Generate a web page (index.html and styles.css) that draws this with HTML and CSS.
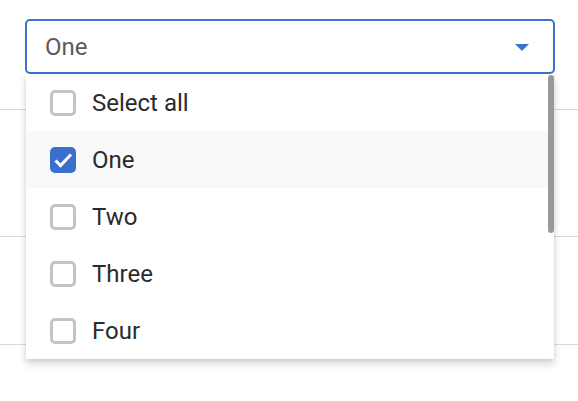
FILE: index.html
```html
<!DOCTYPE html>
<html>
<head>
<meta charset="utf-8">
<link rel="stylesheet" href="styles.css">
</head>
<body>
<div class="page">
  <div class="field">
    <div class="select">
      <span class="value">One</span>
      <svg class="arrow" width="14" height="7" viewBox="0 0 14 7"><path d="M0 0H14L7 7Z" fill="#3b73cf"/></svg>
    </div>
    <div class="menu">
      <div class="option"><span class="box"></span><span class="label">Select all</span></div>
      <div class="option active"><span class="box checked"><svg width="26" height="26" viewBox="0 0 26 26"><path d="M5.5 13.5l5 5L21 7.5" fill="none" stroke="#fff" stroke-width="3"/></svg></span><span class="label">One</span></div>
      <div class="option"><span class="box"></span><span class="label">Two</span></div>
      <div class="option"><span class="box"></span><span class="label">Three</span></div>
      <div class="option"><span class="box"></span><span class="label">Four</span></div>
      <div class="thumb"></div>
    </div>
  </div>
  <div class="table">
    <div class="row r1"></div>
    <div class="row r2"></div>
    <div class="row r3"></div>
  </div>
</div>
</body>
</html>
```

FILE: styles.css
```css
html, body {
  margin: 0;
  padding: 0;
  background: #fff;
}
body {
  font-family: Roboto, "Liberation Sans", sans-serif;
  width: 578px;
  height: 401px;
  overflow: hidden;
}
.page {
  padding-top: 19px;
}
.field {
  position: relative;
  z-index: 2;
  margin-left: 25px;
  width: 530px;
}
.select {
  box-sizing: border-box;
  height: 55px;
  border: 2px solid #3b73cf;
  border-radius: 5px;
  display: flex;
  align-items: center;
  justify-content: space-between;
  padding: 0 24px 0 18px;
  background: #fff;
}
.value {
  font-size: 24px;
  color: #5a5a5a;
}
.arrow {
  display: block;
  margin-top: 1px;
}
.menu {
  position: absolute;
  top: 100%;
  left: 1px;
  right: 1px;
  height: 285px;
  overflow: hidden;
  background: #fff;
  box-shadow: 0 5px 8px rgba(0,0,0,0.16), 0 1px 4px rgba(0,0,0,0.08);
}
.thumb {
  position: absolute;
  right: 0;
  top: 1px;
  width: 6px;
  height: 158px;
  background: #999;
  border-radius: 3px;
}
.option {
  height: 57px;
  display: flex;
  align-items: center;
  padding-left: 24px;
  gap: 16px;
}
.option.active {
  background: #f9f9f9;
}
.box {
  box-sizing: border-box;
  width: 26px;
  height: 26px;
  border: 3px solid #c4c4c4;
  border-radius: 5px;
  flex: none;
  position: relative;
}
.box.checked {
  background: #3a70cc;
  border-color: #3a70cc;
}
.box svg {
  position: absolute;
  left: -3px;
  top: -3px;
}
.label {
  font-size: 24px;
  color: #2b2b2b;
}
.table {
  width: 100%;
}
.row {
  border-bottom: 1px solid #d8d8d8;
}
.r1 { height: 35px; }
.r2 { height: 126px; }
.r3 { height: 107px; }
```
